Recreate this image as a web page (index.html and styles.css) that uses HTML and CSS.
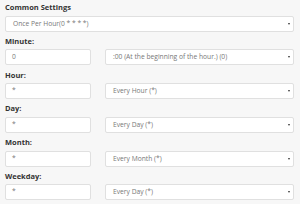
FILE: index.html
```html
<!DOCTYPE html>
<html>
<head>
<meta charset="utf-8">
<link rel="stylesheet" href="styles.css">
</head>
<body>
<div class="form">
  <div class="group">
    <div class="label">Common Settings</div>
    <div class="select full"><span>Once Per Hour(0 * * * *)</span><i class="caret"></i></div>
  </div>
  <div class="group">
    <div class="label">Minute:</div>
    <div class="row">
      <div class="input">0</div>
      <div class="select"><span>:00 (At the beginning of the hour.) (0)</span><i class="caret"></i></div>
    </div>
  </div>
  <div class="group">
    <div class="label">Hour:</div>
    <div class="row">
      <div class="input">*</div>
      <div class="select"><span>Every Hour (*)</span><i class="caret"></i></div>
    </div>
  </div>
  <div class="group">
    <div class="label">Day:</div>
    <div class="row">
      <div class="input">*</div>
      <div class="select"><span>Every Day (*)</span><i class="caret"></i></div>
    </div>
  </div>
  <div class="group">
    <div class="label">Month:</div>
    <div class="row">
      <div class="input">*</div>
      <div class="select"><span>Every Month (*)</span><i class="caret"></i></div>
    </div>
  </div>
  <div class="group">
    <div class="label">Weekday:</div>
    <div class="row">
      <div class="input">*</div>
      <div class="select"><span>Every Day (*)</span><i class="caret"></i></div>
    </div>
  </div>
</div>
</body>
</html>
```
FILE: styles.css
```css
html, body {
  margin: 0;
  padding: 0;
  background: #f7f7f7;
}
body {
  width: 300px;
  height: 204px;
  overflow: hidden;
  font-family: "Open Sans", "Liberation Sans", sans-serif;
}
.form {
  display: flex;
  flex-direction: column;
  gap: 3.25px;
  padding: 1px 6px 0 5px;
}
.group {
  display: flex;
  flex-direction: column;
  gap: 2.5px;
}
.label {
  font-size: 7.5px;
  font-weight: 700;
  line-height: 12px;
  color: #333;
}
.row {
  display: flex;
  gap: 14px;
}
.input, .select {
  box-sizing: border-box;
  height: 16px;
  background: #fff;
  border: 1px solid #e0e0e0;
  border-radius: 2px;
  font-size: 6.7px;
  line-height: 14px;
  color: #777;
  padding: 0 6px;
}
.input {
  width: 86px;
  flex: none;
}
.select {
  flex: 1;
  display: flex;
  justify-content: space-between;
  align-items: center;
  padding-left: 7px;
  padding-right: 3px;
}
.select span {
  line-height: 14px;
}
.caret {
  width: 0;
  height: 0;
  border-left: 1.5px solid transparent;
  border-right: 1.5px solid transparent;
  border-top: 2.5px solid #333;
}
```
